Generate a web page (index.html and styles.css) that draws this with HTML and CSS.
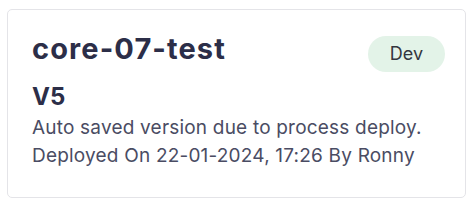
FILE: index.html
```html
<!DOCTYPE html>
<html>
  <head>
    <meta charset="UTF-8">
    <link rel="stylesheet" href="styles.css">
  </head>
  <body>
    <div class="tarjeta">
      <div class="cabecera">
        <div class="titulo">core-07-test</div>
        <span class="etiqueta">Dev</span>
      </div>
      <div class="version">V5</div>
      <div class="detalle">Auto saved version due to process deploy.</div>
      <div class="detalle">Deployed On 22-01-2024, 17:26 By Ronny</div>
    </div>
  </body>
</html>
```

FILE: styles.css
```css
html{background-color: white;}
body{
  margin: 0;
  padding: 9px 8px 4px 7px;
  font-family: Inter, "Noto Sans", sans-serif;
}
.tarjeta{
  border: 1px solid #e4e4e8;
  border-radius: 5px;
  padding: 21px 20px 18px 24px;
  height: 189px;
  box-sizing: border-box;
}
.cabecera{
  display: flex;
  justify-content: space-between;
  align-items: flex-start;
}
.titulo{
  font-size: 29px;
  font-weight: 700;
  letter-spacing: 1.1px;
  color: #2c2e48;
  line-height: 36px;
}
.etiqueta{
  background-color: #e3f3e8;
  color: #34363f;
  font-size: 18px;
  border-radius: 18px;
  padding: 0 22px;
  height: 36px;
  line-height: 36px;
  margin-top: 5px;
}
.version{
  font-size: 24px;
  font-weight: 700;
  color: #2c2e48;
  line-height: 30px;
  margin-top: 10px;
  margin-bottom: 2px;
}
.detalle{
  font-size: 19px;
  letter-spacing: 0.2px;
  color: #4a4c63;
  line-height: 28px;
}
```
